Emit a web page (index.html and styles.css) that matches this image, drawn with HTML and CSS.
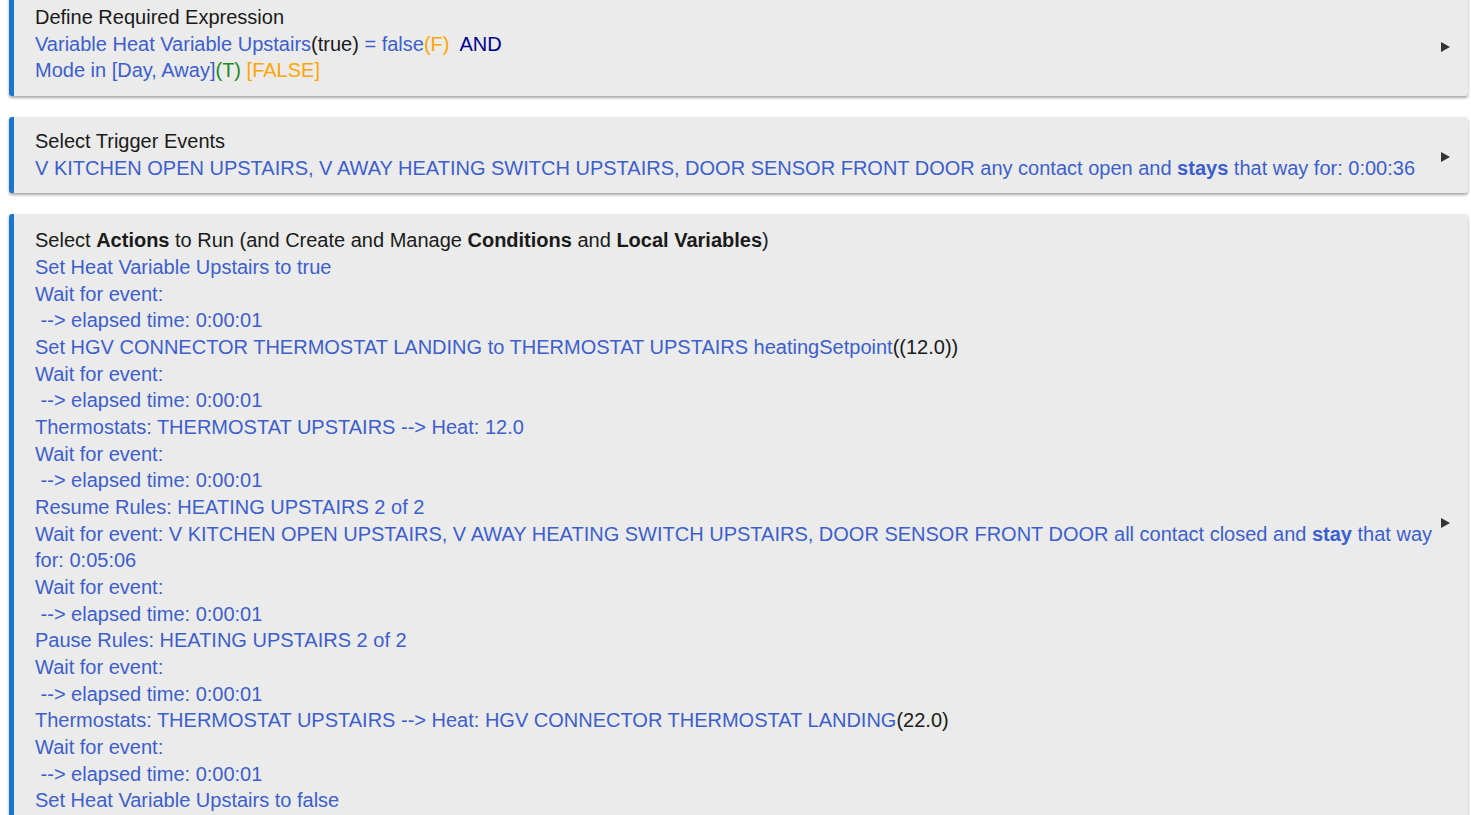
FILE: index.html
```html
<!DOCTYPE html>
<html>
<head>
<meta charset="utf-8">
<link rel="stylesheet" href="styles.css">
</head>
<body>
<div class="page">
  <div class="card card-first">
    <div class="content">
      <div class="title">Define Required Expression</div>
      <div class="ln"><span class="b">Variable Heat Variable Upstairs</span>(true) <span class="b">= false</span><span class="o">(F)</span>&nbsp; <span class="n">AND</span></div>
      <div class="ln"><span class="b">Mode in [Day, Away]</span><span class="g">(T)</span> <span class="o">[FALSE]</span></div>
    </div>
    <div class="arrow"></div>
  </div>

  <div class="card">
    <div class="content">
      <div class="title">Select Trigger Events</div>
      <div class="ln b">V KITCHEN OPEN UPSTAIRS, V AWAY HEATING SWITCH UPSTAIRS, DOOR SENSOR FRONT DOOR any contact open and <strong>stays</strong> that way for: 0:00:36</div>
    </div>
    <div class="arrow"></div>
  </div>

  <div class="card card-last">
    <div class="content">
      <div class="title">Select <strong>Actions</strong> to Run (and Create and Manage <strong>Conditions</strong> and <strong>Local Variables</strong>)</div>
      <div class="b">
        <div>Set Heat Variable Upstairs to true</div>
        <div>Wait for event: </div>
        <div>&nbsp;--&gt; elapsed time: 0:00:01</div>
        <div>Set HGV CONNECTOR THERMOSTAT LANDING to THERMOSTAT UPSTAIRS heatingSetpoint<span class="k">((12.0))</span></div>
        <div>Wait for event: </div>
        <div>&nbsp;--&gt; elapsed time: 0:00:01</div>
        <div>Thermostats: THERMOSTAT UPSTAIRS --&gt; Heat: 12.0</div>
        <div>Wait for event: </div>
        <div>&nbsp;--&gt; elapsed time: 0:00:01</div>
        <div>Resume Rules: HEATING UPSTAIRS 2 of 2</div>
        <div>Wait for event: V KITCHEN OPEN UPSTAIRS, V AWAY HEATING SWITCH UPSTAIRS, DOOR SENSOR FRONT DOOR all contact closed and <strong>stay</strong> that way for: 0:05:06</div>
        <div>Wait for event: </div>
        <div>&nbsp;--&gt; elapsed time: 0:00:01</div>
        <div>Pause Rules: HEATING UPSTAIRS 2 of 2</div>
        <div>Wait for event: </div>
        <div>&nbsp;--&gt; elapsed time: 0:00:01</div>
        <div>Thermostats: THERMOSTAT UPSTAIRS --&gt; Heat: HGV CONNECTOR THERMOSTAT LANDING<span class="k">(22.0)</span></div>
        <div>Wait for event: </div>
        <div>&nbsp;--&gt; elapsed time: 0:00:01</div>
        <div>Set Heat Variable Upstairs to false</div>
      </div>
    </div>
    <div class="arrow"></div>
  </div>
</div>
</body>
</html>
```

FILE: styles.css
```css
html, body {
  margin: 0;
  padding: 0;
  background: #ffffff;
}
body {
  font-family: "Liberation Sans", Arial, sans-serif;
  font-size: 20px;
  line-height: 26.67px;
  color: #1a1a1a;
  overflow: hidden;
  height: 815px;
}
.page {
  display: flex;
  flex-direction: column;
  gap: 21px;
  padding: 0 3px 0 9px;
  margin-top: -7px;
}
.card {
  display: flex;
  align-items: center;
  background: #ebebeb;
  border-left: 5px solid #1a76cc;
  border-radius: 3px;
  box-shadow: 0 2px 3px rgba(0,0,0,0.35);
  padding: 11px 18px 12px 21px;
}
.card-last {
  padding-top: 13px;
  padding-bottom: 40px;
}
.content {
  flex: 1;
  min-width: 0;
  padding-right: 6px;
}
.title {
  color: #1a1a1a;
}
.b {
  color: #3d5fcc;
}
.o {
  color: #ffa500;
}
.g {
  color: #1f8a1f;
}
.n {
  color: #00008b;
}
.k {
  color: #1a1a1a;
}
strong {
  font-weight: bold;
}
.arrow {
  flex: none;
  width: 0;
  height: 0;
  border-left: 9px solid #333333;
  border-top: 5px solid transparent;
  border-bottom: 5px solid transparent;
  margin-top: 5px;
  margin-left: 1px;
}
```
